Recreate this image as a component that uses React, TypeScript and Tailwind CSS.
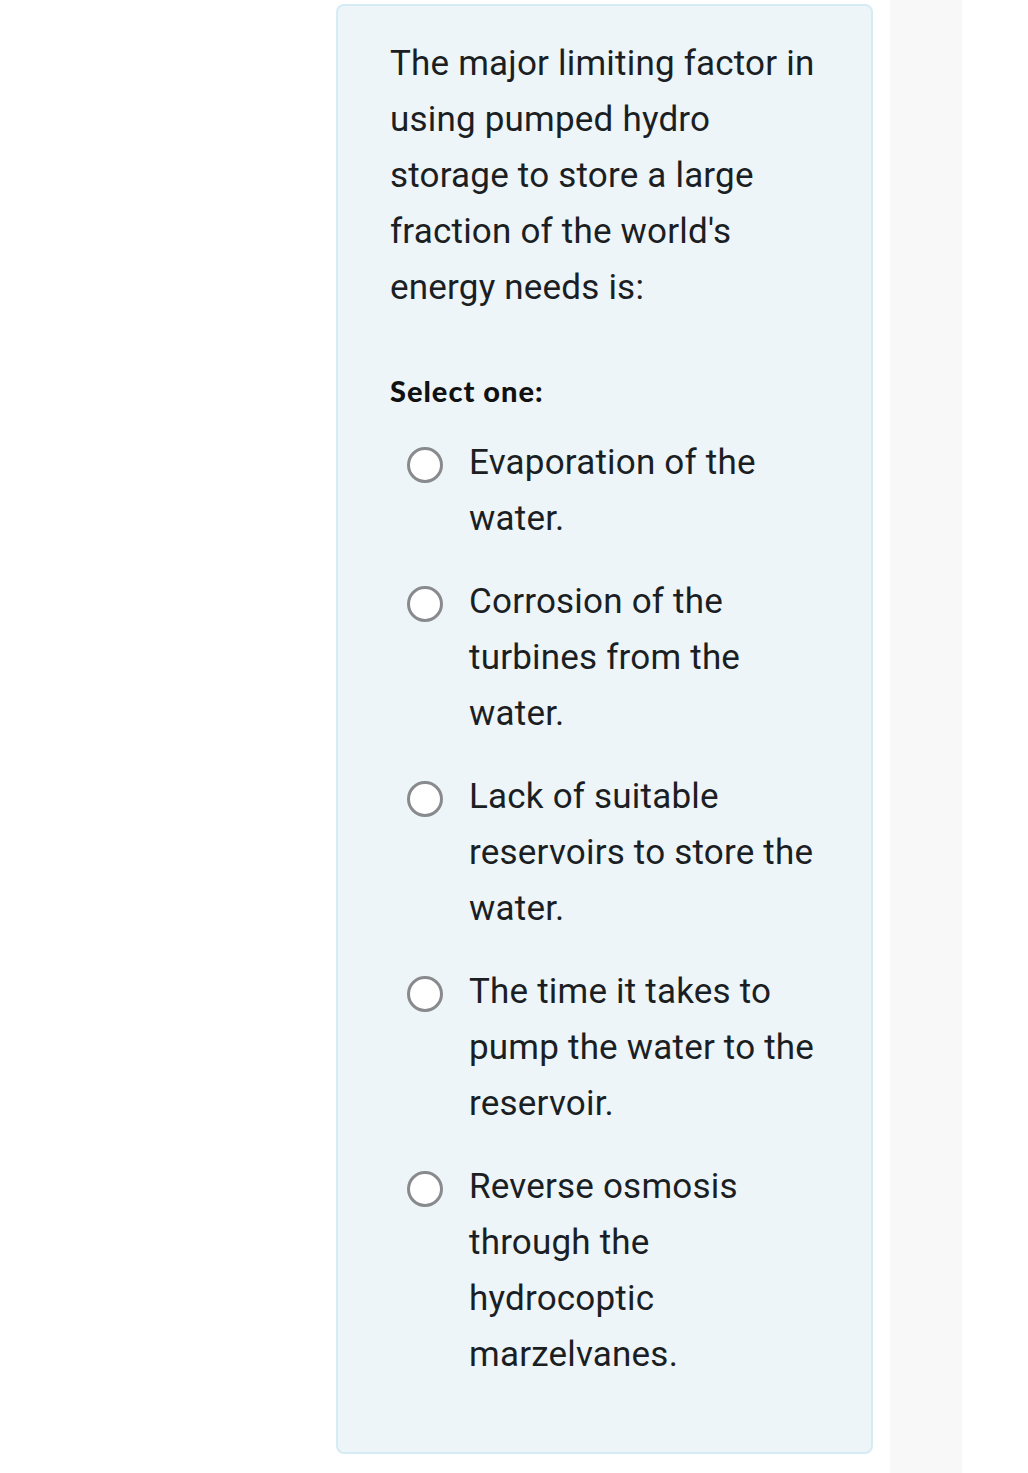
import React from "react";

const question = [
  "The major limiting factor in",
  "using pumped hydro",
  "storage to store a large",
  "fraction of the world's",
  "energy needs is:",
];

const options: string[][] = [
  ["Evaporation of the", "water."],
  ["Corrosion of the", "turbines from the", "water."],
  ["Lack of suitable", "reservoirs to store the", "water."],
  ["The time it takes to", "pump the water to the", "reservoir."],
  ["Reverse osmosis", "through the", "hydrocoptic", "marzelvanes."],
];

function Lines({ lines }: { lines: string[] }) {
  return (
    <>
      {lines.map((line, i) => (
        <span key={i} className="block whitespace-nowrap">
          {line}
        </span>
      ))}
    </>
  );
}

export default function App() {
  return (
    <div className="flex h-[1473px] w-[1028px] overflow-hidden bg-white pl-[336px]">
      <div className="mt-[4px] h-[1450px] w-[537px] rounded-[8px] border-2 border-[#d6ecf4] bg-[#edf5f9] pl-[52px] pt-[30px] text-[#1b1f23] [font-family:Roboto,'Liberation_Sans',sans-serif]">
        <div className="text-[35px] leading-[56px] tracking-[0.2px]">
          <Lines lines={question} />
        </div>

        <div className="mt-[55px] text-[29px] font-black leading-[40px] tracking-[1px] text-[#111] [font-family:Lato,'Noto_Sans',sans-serif]">
          Select one:
        </div>

        <div className="mt-[24px] flex flex-col gap-[27px]">
          {options.map((opt, i) => (
            <label key={i} className="flex items-start">
              <span className="ml-[17px] mt-[12px] h-[36px] w-[36px] shrink-0 rounded-full border-[3px] border-[#888a8d] bg-white" />
              <span className="ml-[26px] text-[35px] leading-[56px] tracking-[0.2px]">
                <Lines lines={opt} />
              </span>
            </label>
          ))}
        </div>
      </div>
      <div className="ml-[17px] h-full w-[72px] bg-[#f8f8f8]" />
    </div>
  );
}
